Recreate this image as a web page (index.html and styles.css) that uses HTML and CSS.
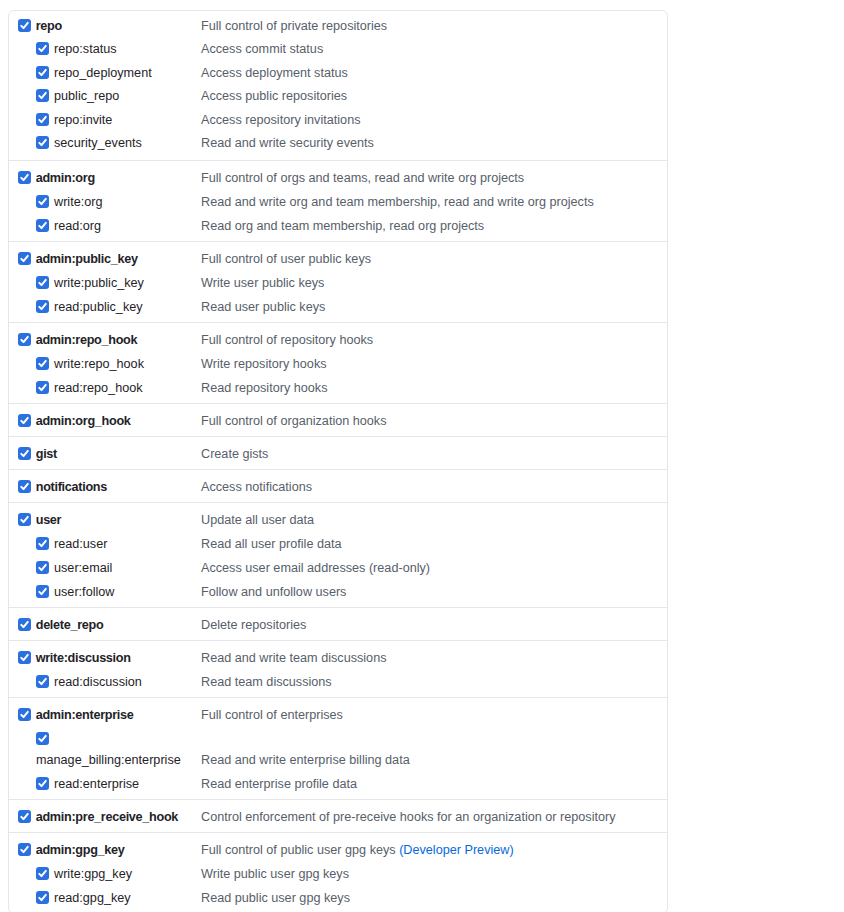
FILE: index.html
```html
<!DOCTYPE html>
<html lang="en">
<head>
    <meta charset="UTF-8">
    <meta name="viewport" content="width=device-width, initial-scale=1.0">
    <title>Token scopes</title>
    <link rel="stylesheet" href="styles.css">
</head>
<body>
    <div class="scopes">
        <div class="group">
            <div class="scope top">
                <label class="name"><span class="check"><svg viewBox="0 0 13 13"><path d="M3.3 6.9 5.5 9.1 9.8 3.9"/></svg></span> repo</label>
                <span class="desc">Full control of private repositories</span>
            </div>
            <div class="scope sub">
                <label class="name"><span class="check"><svg viewBox="0 0 13 13"><path d="M3.3 6.9 5.5 9.1 9.8 3.9"/></svg></span> repo:status</label>
                <span class="desc">Access commit status</span>
            </div>
            <div class="scope sub">
                <label class="name"><span class="check"><svg viewBox="0 0 13 13"><path d="M3.3 6.9 5.5 9.1 9.8 3.9"/></svg></span> repo_deployment</label>
                <span class="desc">Access deployment status</span>
            </div>
            <div class="scope sub">
                <label class="name"><span class="check"><svg viewBox="0 0 13 13"><path d="M3.3 6.9 5.5 9.1 9.8 3.9"/></svg></span> public_repo</label>
                <span class="desc">Access public repositories</span>
            </div>
            <div class="scope sub">
                <label class="name"><span class="check"><svg viewBox="0 0 13 13"><path d="M3.3 6.9 5.5 9.1 9.8 3.9"/></svg></span> repo:invite</label>
                <span class="desc">Access repository invitations</span>
            </div>
            <div class="scope sub">
                <label class="name"><span class="check"><svg viewBox="0 0 13 13"><path d="M3.3 6.9 5.5 9.1 9.8 3.9"/></svg></span> security_events</label>
                <span class="desc">Read and write security events</span>
            </div>
        </div>

        <div class="group">
            <div class="scope top">
                <label class="name"><span class="check"><svg viewBox="0 0 13 13"><path d="M3.3 6.9 5.5 9.1 9.8 3.9"/></svg></span> admin:org</label>
                <span class="desc">Full control of orgs and teams, read and write org projects</span>
            </div>
            <div class="scope sub">
                <label class="name"><span class="check"><svg viewBox="0 0 13 13"><path d="M3.3 6.9 5.5 9.1 9.8 3.9"/></svg></span> write:org</label>
                <span class="desc">Read and write org and team membership, read and write org projects</span>
            </div>
            <div class="scope sub">
                <label class="name"><span class="check"><svg viewBox="0 0 13 13"><path d="M3.3 6.9 5.5 9.1 9.8 3.9"/></svg></span> read:org</label>
                <span class="desc">Read org and team membership, read org projects</span>
            </div>
        </div>

        <div class="group">
            <div class="scope top">
                <label class="name"><span class="check"><svg viewBox="0 0 13 13"><path d="M3.3 6.9 5.5 9.1 9.8 3.9"/></svg></span> admin:public_key</label>
                <span class="desc">Full control of user public keys</span>
            </div>
            <div class="scope sub">
                <label class="name"><span class="check"><svg viewBox="0 0 13 13"><path d="M3.3 6.9 5.5 9.1 9.8 3.9"/></svg></span> write:public_key</label>
                <span class="desc">Write user public keys</span>
            </div>
            <div class="scope sub">
                <label class="name"><span class="check"><svg viewBox="0 0 13 13"><path d="M3.3 6.9 5.5 9.1 9.8 3.9"/></svg></span> read:public_key</label>
                <span class="desc">Read user public keys</span>
            </div>
        </div>

        <div class="group">
            <div class="scope top">
                <label class="name"><span class="check"><svg viewBox="0 0 13 13"><path d="M3.3 6.9 5.5 9.1 9.8 3.9"/></svg></span> admin:repo_hook</label>
                <span class="desc">Full control of repository hooks</span>
            </div>
            <div class="scope sub">
                <label class="name"><span class="check"><svg viewBox="0 0 13 13"><path d="M3.3 6.9 5.5 9.1 9.8 3.9"/></svg></span> write:repo_hook</label>
                <span class="desc">Write repository hooks</span>
            </div>
            <div class="scope sub">
                <label class="name"><span class="check"><svg viewBox="0 0 13 13"><path d="M3.3 6.9 5.5 9.1 9.8 3.9"/></svg></span> read:repo_hook</label>
                <span class="desc">Read repository hooks</span>
            </div>
        </div>

        <div class="group">
            <div class="scope top">
                <label class="name"><span class="check"><svg viewBox="0 0 13 13"><path d="M3.3 6.9 5.5 9.1 9.8 3.9"/></svg></span> admin:org_hook</label>
                <span class="desc">Full control of organization hooks</span>
            </div>
        </div>

        <div class="group">
            <div class="scope top">
                <label class="name"><span class="check"><svg viewBox="0 0 13 13"><path d="M3.3 6.9 5.5 9.1 9.8 3.9"/></svg></span> gist</label>
                <span class="desc">Create gists</span>
            </div>
        </div>

        <div class="group">
            <div class="scope top">
                <label class="name"><span class="check"><svg viewBox="0 0 13 13"><path d="M3.3 6.9 5.5 9.1 9.8 3.9"/></svg></span> notifications</label>
                <span class="desc">Access notifications</span>
            </div>
        </div>

        <div class="group">
            <div class="scope top">
                <label class="name"><span class="check"><svg viewBox="0 0 13 13"><path d="M3.3 6.9 5.5 9.1 9.8 3.9"/></svg></span> user</label>
                <span class="desc">Update all user data</span>
            </div>
            <div class="scope sub">
                <label class="name"><span class="check"><svg viewBox="0 0 13 13"><path d="M3.3 6.9 5.5 9.1 9.8 3.9"/></svg></span> read:user</label>
                <span class="desc">Read all user profile data</span>
            </div>
            <div class="scope sub">
                <label class="name"><span class="check"><svg viewBox="0 0 13 13"><path d="M3.3 6.9 5.5 9.1 9.8 3.9"/></svg></span> user:email</label>
                <span class="desc">Access user email addresses (read-only)</span>
            </div>
            <div class="scope sub">
                <label class="name"><span class="check"><svg viewBox="0 0 13 13"><path d="M3.3 6.9 5.5 9.1 9.8 3.9"/></svg></span> user:follow</label>
                <span class="desc">Follow and unfollow users</span>
            </div>
        </div>

        <div class="group">
            <div class="scope top">
                <label class="name"><span class="check"><svg viewBox="0 0 13 13"><path d="M3.3 6.9 5.5 9.1 9.8 3.9"/></svg></span> delete_repo</label>
                <span class="desc">Delete repositories</span>
            </div>
        </div>

        <div class="group">
            <div class="scope top">
                <label class="name"><span class="check"><svg viewBox="0 0 13 13"><path d="M3.3 6.9 5.5 9.1 9.8 3.9"/></svg></span> write:discussion</label>
                <span class="desc">Read and write team discussions</span>
            </div>
            <div class="scope sub">
                <label class="name"><span class="check"><svg viewBox="0 0 13 13"><path d="M3.3 6.9 5.5 9.1 9.8 3.9"/></svg></span> read:discussion</label>
                <span class="desc">Read team discussions</span>
            </div>
        </div>

        <div class="group">
            <div class="scope top">
                <label class="name"><span class="check"><svg viewBox="0 0 13 13"><path d="M3.3 6.9 5.5 9.1 9.8 3.9"/></svg></span> admin:enterprise</label>
                <span class="desc">Full control of enterprises</span>
            </div>
            <div class="scope sub">
                <label class="name"><span class="check"><svg viewBox="0 0 13 13"><path d="M3.3 6.9 5.5 9.1 9.8 3.9"/></svg></span> manage_billing:enterprise</label>
                <span class="desc">Read and write enterprise billing data</span>
            </div>
            <div class="scope sub">
                <label class="name"><span class="check"><svg viewBox="0 0 13 13"><path d="M3.3 6.9 5.5 9.1 9.8 3.9"/></svg></span> read:enterprise</label>
                <span class="desc">Read enterprise profile data</span>
            </div>
        </div>

        <div class="group">
            <div class="scope top">
                <label class="name"><span class="check"><svg viewBox="0 0 13 13"><path d="M3.3 6.9 5.5 9.1 9.8 3.9"/></svg></span> admin:pre_receive_hook</label>
                <span class="desc">Control enforcement of pre-receive hooks for an organization or repository</span>
            </div>
        </div>

        <div class="group">
            <div class="scope top">
                <label class="name"><span class="check"><svg viewBox="0 0 13 13"><path d="M3.3 6.9 5.5 9.1 9.8 3.9"/></svg></span> admin:gpg_key</label>
                <span class="desc">Full control of public user gpg keys <a href="#" class="preview">(Developer Preview)</a></span>
            </div>
            <div class="scope sub">
                <label class="name"><span class="check"><svg viewBox="0 0 13 13"><path d="M3.3 6.9 5.5 9.1 9.8 3.9"/></svg></span> write:gpg_key</label>
                <span class="desc">Write public user gpg keys</span>
            </div>
            <div class="scope sub">
                <label class="name"><span class="check"><svg viewBox="0 0 13 13"><path d="M3.3 6.9 5.5 9.1 9.8 3.9"/></svg></span> read:gpg_key</label>
                <span class="desc">Read public user gpg keys</span>
            </div>
        </div>
    </div>
</body>
</html>
```

FILE: styles.css
```css
body
{
    margin: 8px;
    font-family: "Liberation Sans", Arial, sans-serif;
    font-size: 12.65px;
    color: #1f2328;
    background: #fff;
}

.scopes
{
    margin-top: 2px;
    width: 658px;
    border: 1px solid #e4e6ea;
    border-radius: 6px;
}

.group
{
    padding: 6.5px 9px 4.5px;
    border-top: 1px solid #e4e6ea;
}

.group:first-child
{
    padding-top: 4.5px;
    padding-bottom: 6px;
    border-top: none;
}

.scope
{
    display: flex;
    align-items: flex-end;
    line-height: 21px;
}

.scope + .scope { margin-top: 3px; }

.group:first-child .scope + .scope { margin-top: 2.6px; }

.name
{
    box-sizing: border-box;
    flex: none;
    width: 183px;
    padding-right: 8px;
}

.top .name
{
    font-weight: bold;
    letter-spacing: -0.3px;
}

.sub .name { padding-left: 18px; }

.check
{
    display: inline-block;
    width: 13px;
    height: 13px;
    margin-right: 1.5px;
    border-radius: 3px;
    background: #2a70e0;
    vertical-align: -2px;
}

.check svg
{
    display: block;
    width: 13px;
    height: 13px;
    fill: none;
    stroke: #fff;
    stroke-width: 2;
    stroke-linecap: round;
    stroke-linejoin: round;
}

.desc { color: #57606a; }

.preview
{
    color: #0969da;
    text-decoration: none;
}
```
